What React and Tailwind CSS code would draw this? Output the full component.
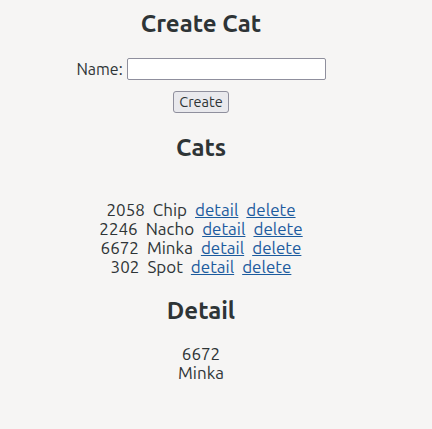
import React, { useState } from 'react';

const cats = [
  { id: 2058, name: 'Chip' },
  { id: 2246, name: 'Nacho' },
  { id: 6672, name: 'Minka' },
  { id: 302, name: 'Spot' },
];

export default function App() {
  const [name, setName] = useState('');
  const selected = cats[2];

  return (
    <div className="min-h-[429px] bg-[#f6f5f4] text-[#2e3436] font-['Ubuntu','Noto_Sans',sans-serif]">
      <div className="w-[402px] flex flex-col items-center pt-2">
        {/* Create */}
        <h2 className="text-[24px] leading-8 font-bold">Create Cat</h2>
        <div className="mt-[18px] flex items-center gap-[4px] h-[22px] text-[16px]">
          <label>Name:</label>
          <input
            value={name}
            onChange={(e) => setName(e.target.value)}
            className="w-[199px] h-[22px] bg-white border border-[#8f8f9d] rounded-[2px] px-1 text-[14px]"
          />
        </div>
        <button className="mt-[11px] h-[22px] px-[5px] text-[14.5px] leading-none bg-[#e9e9ed] border border-[#8f8f9d] rounded-[3px]">
          Create
        </button>

        {/* List */}
        <h2 className="mt-[19px] text-[24px] leading-8 font-bold">Cats</h2>
        <div className="mt-[36px] flex flex-col items-center text-[17px] leading-[19px]">
          {cats.map((cat) => (
            <div key={cat.id} className="flex gap-[8px]">
              <span>{cat.id}</span>
              <span>{cat.name}</span>
              <a href="#" className="text-[#1c5b9e] underline">detail</a>
              <a href="#" className="text-[#1c5b9e] underline">delete</a>
            </div>
          ))}
        </div>

        {/* Detail */}
        <h2 className="mt-[19px] text-[24px] leading-8 font-bold">Detail</h2>
        <div className="mt-[17px] flex flex-col items-center text-[17px] leading-[19px]">
          <span>{selected.id}</span>
          <span>{selected.name}</span>
        </div>
      </div>
    </div>
  );
}
